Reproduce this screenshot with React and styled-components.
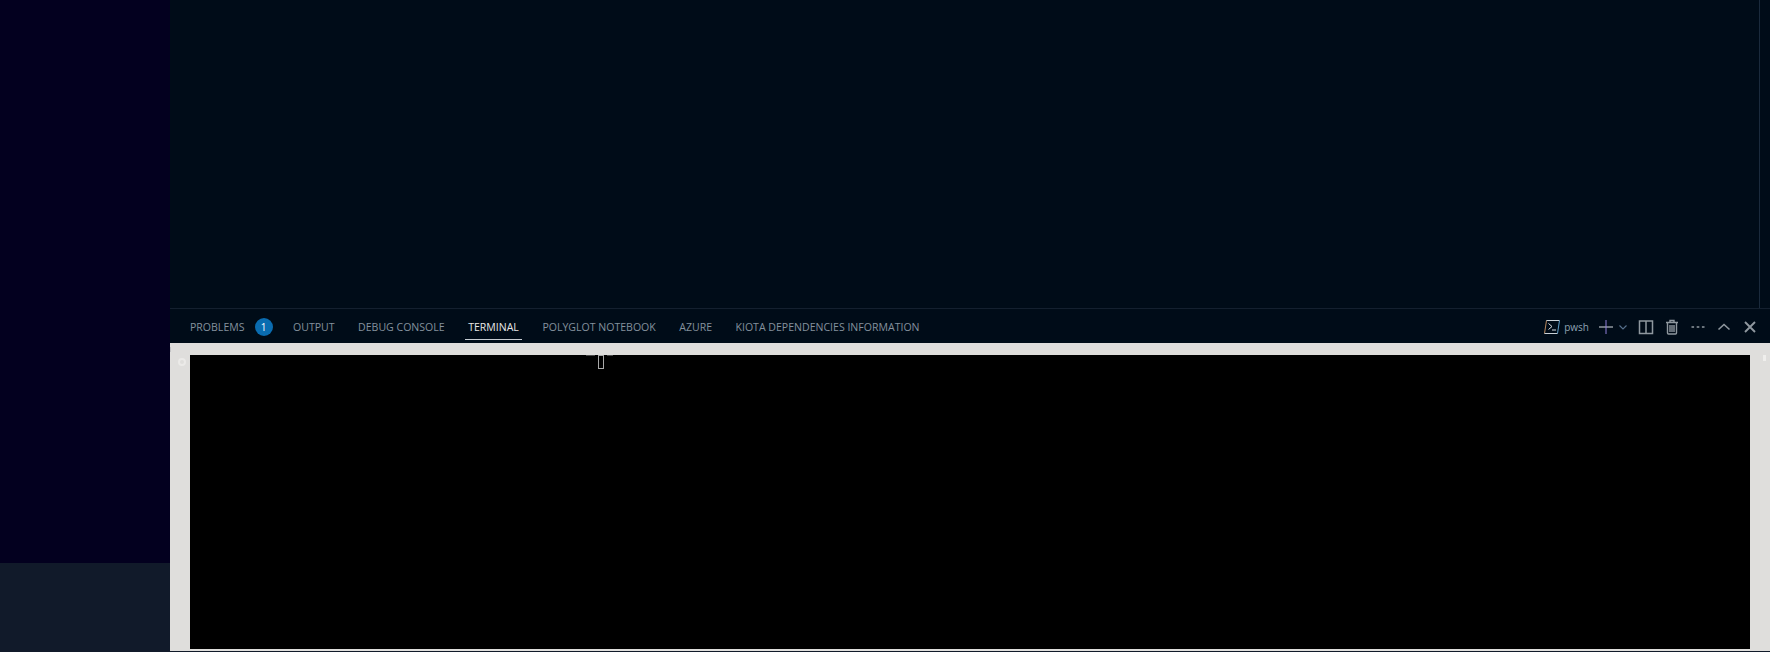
import React from "react";
import styled, { createGlobalStyle } from "styled-components";

const tabs = [
  { label: "PROBLEMS", badge: "1" },
  { label: "OUTPUT" },
  { label: "DEBUG CONSOLE" },
  { label: "TERMINAL", active: true },
  { label: "POLYGLOT NOTEBOOK" },
  { label: "AZURE" },
  { label: "KIOTA DEPENDENCIES INFORMATION" },
];

const App = () => {
  return (
    <Workbench>
      <GlobalStyle />
      <Sidebar>
        <SidebarList />
        <SidebarFooter />
      </Sidebar>
      <Main>
        <Editor>
          <Ruler />
        </Editor>
        <Panel>
          <TabBar>
            <Tabs>
              {tabs.map(tab => (
                <Tab key={tab.label} $active={tab.active}>
                  <TabLabel $active={tab.active}>{tab.label}</TabLabel>
                  {tab.badge && <Badge>{tab.badge}</Badge>}
                </Tab>
              ))}
            </Tabs>
            <Actions>
              <ShellName>
                <ActionIcon viewBox="0 0 16 16">
                  <path stroke="#b98a5e" d="M2.5 1.5L.5 14.5" />
                  <path stroke="#c9d0d6" d="M2.5 1.5h13M.5 14.5h13" />
                  <path stroke="#5f9fc9" d="M15.5 1.5l-2 13" />
                  <path stroke="#d8dde2" d="M4.5 4.5l3.5 3-3.5 3M8 11h4" />
                </ActionIcon>
                pwsh
              </ShellName>
              <PlusGroup>
                <ActionIcon viewBox="0 0 16 16">
                  <path stroke="#d8dde2" d="M1 8h14" />
                  <path stroke="#8f7fd8" d="M8 1v14" />
                </ActionIcon>
                <Chevron viewBox="0 0 10 10">
                  <path d="M1.5 3.5L5 7l3.5-3.5" />
                </Chevron>
              </PlusGroup>
              <ActionIcon viewBox="0 0 16 16" $weight={1.5}>
                <path d="M1.5 2h13v12.5h-13zM8 2v12.5" />
              </ActionIcon>
              <ActionIcon viewBox="0 0 16 16" $weight={1.4}>
                <path d="M2 3.5h12M6 3.5V1.5h4v2M3.5 3.5v10.5a1 1 0 0 0 1 1h7a1 1 0 0 0 1-1V3.5M6 6v7M8 6v7M10 6v7" />
              </ActionIcon>
              <ActionIcon viewBox="0 0 16 16" $weight={1.6}>
                <path d="M1.5 8h2.6M6.7 8h2.6M11.9 8h2.6" />
              </ActionIcon>
              <ActionIcon viewBox="0 0 16 16" $weight={1.6}>
                <path d="M2.5 10.5L8 5.5l5.5 5" />
              </ActionIcon>
              <ActionIcon viewBox="0 0 16 16" $weight={1.9}>
                <path d="M3 3l10 10M13 3L3 13" />
              </ActionIcon>
            </Actions>
          </TabBar>
          <TerminalFrame>
            <FrameDots />
            <FrameRing />
            <ScrollMark />
            <Terminal>
              <Cursor />
            </Terminal>
          </TerminalFrame>
        </Panel>
      </Main>
    </Workbench>
  );
};

export default App;

const GlobalStyle = createGlobalStyle`
  html, body {
    margin: 0;
    height: 100%;
    overflow: hidden;
    background: #000c18;
  }
  #root {
    height: 100%;
  }
`;

const Workbench = styled.div`
  display: flex;
  height: 652px;
  font-family: "Open Sans", "Noto Sans", sans-serif;
`;

const Sidebar = styled.aside`
  width: 170px;
  display: flex;
  flex-direction: column;
`;

const SidebarList = styled.div`
  flex: 1;
  background: #03001f;
`;

const SidebarFooter = styled.div`
  height: 89px;
  background: #111a2a;
`;

const Main = styled.div`
  flex: 1;
  display: flex;
  flex-direction: column;
`;

const Editor = styled.div`
  height: 308px;
  display: flex;
  justify-content: flex-end;
  background: #000c18;
`;

const Ruler = styled.div`
  width: 1px;
  margin-right: 10px;
  background: #1a2a3c;
`;

const Panel = styled.section`
  flex: 1;
  display: flex;
  flex-direction: column;
  border-top: 1px solid #14202f;
  border-bottom: 1px solid #111a2a;
`;

const TabBar = styled.div`
  height: 34px;
  flex: none;
  display: flex;
  align-items: flex-start;
  justify-content: space-between;
  padding: 0 12px 0 20px;
  background: #000c18;
`;

const Tabs = styled.div`
  display: flex;
  gap: 23.5px;
`;

const Tab = styled.div`
  display: flex;
  align-items: center;
  gap: 10px;
  height: 31px;
  box-sizing: border-box;
  padding: 5px 3px 0;
  margin: 0 -3px;
  border-bottom: 1px solid ${props => (props.$active ? "#c6ccd2" : "transparent")};
`;

const TabLabel = styled.span`
  font-size: 10.55px;
  color: ${props => (props.$active ? "#e7e7e7" : "#84919d")};
  white-space: nowrap;
`;

const Badge = styled.span`
  width: 18px;
  height: 18px;
  margin-right: -3px;
  border-radius: 50%;
  display: flex;
  align-items: center;
  justify-content: center;
  background: #0a6cb0;
  color: #fff;
  font-size: 10px;
`;

const Actions = styled.div`
  display: flex;
  align-items: center;
  gap: 10px;
  height: 35px;
  color: #8f989f;
`;

const ActionIcon = styled.svg`
  width: 16px;
  height: 16px;
  fill: none;
  stroke: currentColor;
  stroke-width: ${props => props.$weight || 1};
  flex: none;
`;

const ShellName = styled.div`
  display: flex;
  align-items: center;
  gap: 4px;
  margin-right: -1px;
  font-size: 10px;
  color: #8ea3b3;
`;

const PlusGroup = styled.div`
  display: flex;
  align-items: center;
  gap: 4px;
`;

const Chevron = styled.svg`
  width: 10px;
  height: 10px;
  fill: none;
  stroke: #56708c;
  stroke-width: 1.1;
`;

const TerminalFrame = styled.div`
  position: relative;
  flex: 1;
  padding: 12px 20px 2px;
  background: #dfdedc;
`;

const FrameDots = styled.span`
  position: absolute;
  left: 0;
  top: 4px;
  width: 1px;
  height: 5px;
  background: #c4c4c6;
`;

const FrameRing = styled.span`
  position: absolute;
  left: 8px;
  top: 15px;
  width: 8px;
  height: 8px;
  box-sizing: border-box;
  border: 2px solid #ebeae8;
  border-radius: 50%;
`;

const ScrollMark = styled.span`
  position: absolute;
  right: 4px;
  top: 12px;
  width: 3px;
  height: 6px;
  background: #efeeec;
`;

const Terminal = styled.div`
  position: relative;
  height: 100%;
  background: #000;
`;

const Cursor = styled.span`
  position: absolute;
  left: 408px;
  top: 0;
  width: 6px;
  height: 14px;
  box-sizing: border-box;
  border: 1px solid #a8a8a8;

  &::before,
  &::after {
    content: "";
    position: absolute;
    top: -1px;
    height: 1px;
    background: #4a4a4a;
  }
  &::before {
    right: 8px;
    width: 9px;
  }
  &::after {
    left: 8px;
    width: 6px;
  }
`;
